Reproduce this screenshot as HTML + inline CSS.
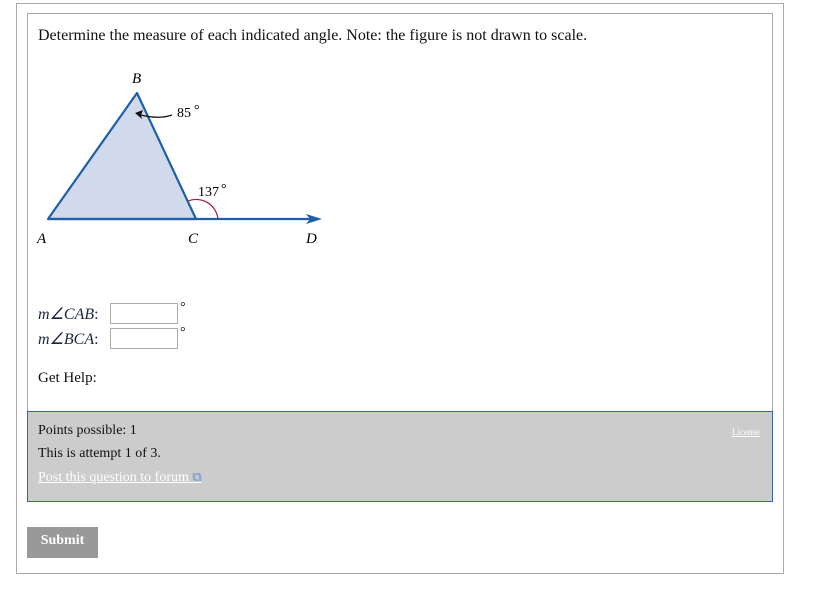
<!DOCTYPE html>
<html><head><meta charset="utf-8"><style>
body{margin:0;background:#fff;font-family:"Liberation Serif",serif;color:#111;}
.outer{position:absolute;left:16px;top:3px;width:766px;height:569px;border:1px solid #aaa;}
.inner{position:absolute;left:27px;top:13px;width:744px;height:487px;border:1px solid #aaa;border-bottom:none;}
.q{position:absolute;left:38px;top:27px;font-size:16px;}
.lab{position:absolute;font-size:16px;font-style:italic;color:#1a2540;}
.inp{position:absolute;left:110px;width:66px;height:19px;border:1px solid #aaa;background:#fff;}
.deg{position:absolute;left:180px;font-size:14px;}
.gray{position:absolute;left:27px;top:411px;width:744px;height:89px;background:#ccc;border:1px solid #3a64a8;}
.t{position:absolute;left:38px;font-size:14px;}
.sub{position:absolute;left:27px;top:527px;width:71px;height:31px;background:#999;color:#fff;font-weight:bold;font-size:14px;text-align:center;line-height:28px;}
</style></head><body>
<div class="outer"></div>
<div class="inner"></div>
<div class="q">Determine the measure of each indicated angle. Note: the figure is not drawn to scale.</div>
<svg style="position:absolute;left:0;top:0" width="824" height="597">
<polygon points="48,219 137,93 196,219" fill="#d0daec" stroke="#1e5fa8" stroke-width="2.2" stroke-linejoin="round"/>
<line x1="48" y1="219" x2="312" y2="219" stroke="#1e5fa8" stroke-width="2.2"/>
<polygon points="322,219 306,214 310,219 306,224" fill="#1e5fa8"/>
<path d="M188,201 A22,22 0 0 1 218,219" fill="none" stroke="#a0203a" stroke-width="1.2"/>
<path d="M172,115 Q158,120 137,114" fill="none" stroke="#111" stroke-width="1.2"/>
<polygon points="135,113 143,110 141,115 142,119" fill="#111"/>
<text x="132" y="83" font-family="Liberation Serif" font-style="italic" font-size="15">B</text>
<text x="177" y="117" font-family="Liberation Serif" font-size="14">85</text>
<text x="194" y="114" font-family="Liberation Serif" font-size="14">°</text>
<text x="198" y="196" font-family="Liberation Serif" font-size="14">137</text>
<text x="221" y="193" font-family="Liberation Serif" font-size="14">°</text>
<text x="37" y="243" font-family="Liberation Serif" font-style="italic" font-size="15">A</text>
<text x="188" y="243" font-family="Liberation Serif" font-style="italic" font-size="15">C</text>
<text x="306" y="243" font-family="Liberation Serif" font-style="italic" font-size="15">D</text>
</svg>
<div class="lab" style="left:38px;top:304px">m∠CAB<span style="font-style:normal">:</span></div>
<div class="inp" style="top:303px"></div><div class="deg" style="top:300px">°</div>
<div class="lab" style="left:38px;top:329px">m∠BCA<span style="font-style:normal">:</span></div>
<div class="inp" style="top:328px"></div><div class="deg" style="top:325px">°</div>
<div class="t" style="top:370px;font-size:15px">Get Help:</div>
<div class="gray"></div>
<div class="t" style="top:423px">Points possible: 1</div>
<div class="t" style="top:446px">This is attempt 1 of 3.</div>
<div class="t" style="top:469px;color:#fff;text-decoration:underline">Post this question to forum <span style="color:#5b8fd6;font-size:13px">⧉</span></div>
<div style="position:absolute;left:732px;top:427px;font-size:9px;color:#fff;text-decoration:underline">License</div>
<div class="sub">Submit</div>
</body></html>
